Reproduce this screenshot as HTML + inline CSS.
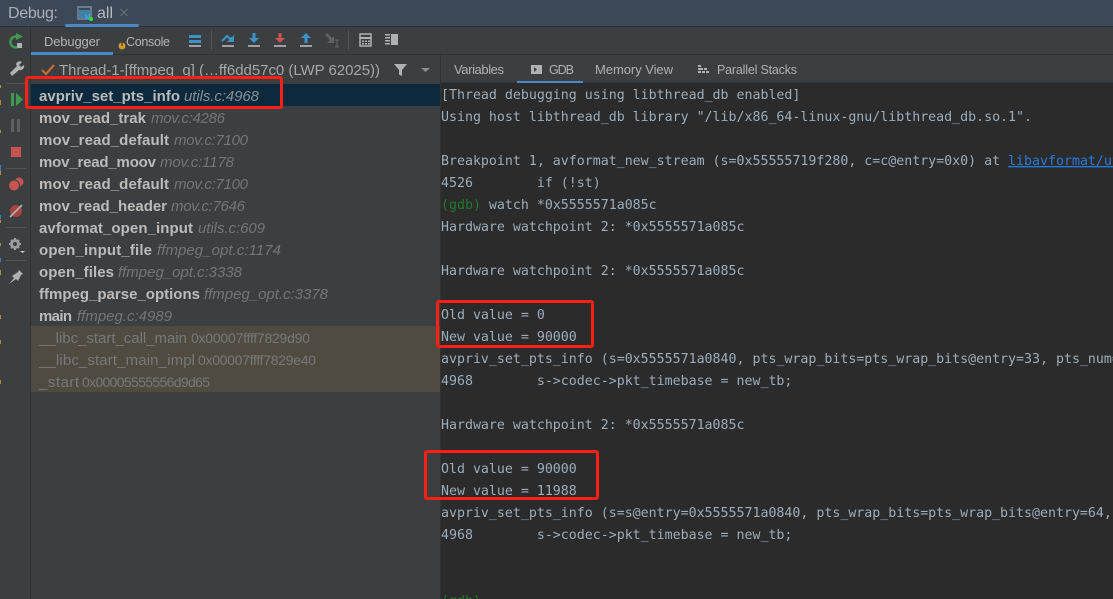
<!DOCTYPE html>
<html><head><meta charset="utf-8"><title>Debug</title>
<style>
html,body{margin:0;padding:0;background:#2b2b2b;overflow:hidden;width:1113px;height:599px}
svg{display:block}
text{white-space:pre}
.s{font-family:"Liberation Sans",sans-serif;font-size:13px;fill:#bbbbbb}
.f{font-family:"Liberation Sans",sans-serif;font-size:15px;font-weight:bold;fill:#bbbbbb}
.i{font-family:"Liberation Sans",sans-serif;font-size:15px;font-style:italic;fill:#757575}
.l{font-family:"Liberation Sans",sans-serif;font-size:15px;fill:#787878}
.h{font-family:"Liberation Sans",sans-serif;font-size:14px;fill:#787878}
.m{font-family:"DejaVu Sans Mono",monospace;font-size:13.28px;fill:#9dadbb}
</style></head><body>
<svg width="1113" height="599" viewBox="0 0 1113 599" xmlns="http://www.w3.org/2000/svg">
<rect width="1113" height="599" fill="#2b2b2b"/>
<rect width="1113" height="26" fill="#3d4856"/>
<rect y="26" width="1113" height="1" fill="#323232"/>
<rect y="27" width="441" height="572" fill="#3c3f41"/>
<rect x="441" y="27" width="672" height="55" fill="#3c3f41"/>
<rect x="31" y="54" width="1082" height="1" fill="#323232"/>
<rect x="30" y="27" width="1" height="572" fill="#323232"/>
<rect x="440" y="55" width="1" height="544" fill="#323232"/>
<rect x="441" y="82" width="672" height="1" fill="#323232"/>

<!-- Title bar -->
<text class="s" x="8" y="18" style="font-size:16px;fill:#aab0b8" textLength="50">Debug:</text>
<rect x="78" y="7" width="13" height="12" fill="none" stroke="#7a8a96" stroke-width="1.500"/>
<rect x="79" y="10" width="11" height="8" fill="#3d7fa5"/>
<path d="M85 19V13l2.500 3 2.500-3v6" fill="#3d9ad1"/>
<circle cx="91" cy="19" r="2" fill="#2ee02e"/>
<text class="s" x="97" y="18" style="font-size:16px;fill:#b4bac0" textLength="16">all</text>
<path d="M120.500 9l7 7m0-7l-7 7" stroke="#66707a" stroke-width="1.200"/>
<rect x="65" y="24" width="74" height="3" rx="1.500" fill="#4a88c7"/>

<!-- Toolbar tabs -->
<text class="s" x="44" y="46" textLength="56" style="fill:#b4b4b4">Debugger</text>
<rect x="31" y="52" width="82" height="3" fill="#4a88c7"/>
<circle cx="122" cy="46" r="3.500" fill="#d39a22"/>
<path d="M122 42v4" stroke="#3c3f41" stroke-width="1.200"/>
<text class="s" x="126" y="46" textLength="44" style="fill:#b4b4b4;font-size:12.500px">Console</text>

<!-- Toolbar icons -->
<rect x="189" y="35" width="12" height="3" fill="#3c93c9"/>
<rect x="189" y="40" width="12" height="3" fill="#3c93c9"/>
<rect x="189" y="45" width="12" height="2" fill="#a0a0a0"/>
<rect x="211" y="30" width="1" height="20" fill="#55585a"/>
<path d="M222 41l5-5 3 3 2-1.500" fill="none" stroke="#3c93c9" stroke-width="2"/>
<path d="M234 35v7h-7z" fill="#3c93c9"/>
<rect x="222" y="45" width="12" height="2" fill="#a0a0a0"/>
<path d="M254 33v7" stroke="#3c93c9" stroke-width="3"/><path d="M249 38h10l-5 5z" fill="#3c93c9"/>
<rect x="248" y="45" width="12" height="2" fill="#a0a0a0"/>
<path d="M280 33v7" stroke="#c75450" stroke-width="3"/><path d="M275 38h10l-5 5z" fill="#c75450"/>
<rect x="274" y="45" width="12" height="2" fill="#a0a0a0"/>
<path d="M306 43v-6" stroke="#3c93c9" stroke-width="3"/><path d="M301 38h10l-5-5z" fill="#3c93c9"/>
<rect x="300" y="45" width="12" height="2" fill="#a0a0a0"/>
<path d="M326 34l7 7" stroke="#5f6365" stroke-width="3"/><path d="M334 36v7h-7z" fill="#5f6365"/>
<path d="M335 40h4m-2 0v7m-2 0h4" stroke="#666a6c" stroke-width="1"/>
<rect x="348" y="30" width="1" height="20" fill="#55585a"/>
<rect x="360" y="34" width="11" height="12" fill="none" stroke="#afb1b3" stroke-width="1.500"/>
<path d="M360 37h11v2h-11zM362 40.500h2v1.500h-2zM365 40.500h2v1.500h-2zM368 40.500h2v1.500h-2zM362 43h2v1.500h-2zM365 43h2v1.500h-2zM368 43h2v1.500h-2z" fill="#afb1b3"/>
<path d="M385 34h5v1.500h-5zM385 37h5v1.500h-5zM385 40h5v1.500h-5zM385 43h5v1.500h-5z" fill="#afb1b3"/>
<rect x="391" y="34" width="7" height="11" fill="#afb1b3"/>

<!-- Thread row -->
<path d="M42 70l4 4 8-9" fill="none" stroke="#c76a34" stroke-width="2.200"/>
<text class="s" x="59" y="75" style="font-size:15px;fill:#a6a6a6" textLength="321">Thread-1-[ffmpeg_g] (…ff6dd57c0 (LWP 62025))</text>
<path d="M394 64h13l-5 6v6l-3-1.500V70z" fill="#afb1b3"/>
<path d="M421 68h9l-4.500 4z" fill="#8a8d8f"/>

<!-- Left sidebar -->
<path d="M20 46.500a5.500 5.500 0 1 1-0-9" fill="none" stroke="#3d9a50" stroke-width="2.400" transform="translate(-1,0)"/>
<path d="M16 33l7 3.500-7 3.500z" fill="#3d9a50"/>
<rect x="17" y="43" width="5" height="5" fill="#afb1b3"/>
<path d="M10 73l7-7-1-2a4 4 0 0 1 6-2l-3 3 2 2 3-2a4 4 0 0 1-5 5l-7 6z" fill="#afb1b3"/>
<rect x="6" y="83" width="20" height="1" fill="#505355"/>
<rect x="11" y="93" width="3" height="13" fill="#3d9a50"/>
<path d="M16 93l7 6.500-7 6.500z" fill="#3d9a50"/>
<rect x="11" y="119" width="3" height="13" fill="#5d6062"/><rect x="17" y="119" width="3" height="13" fill="#5d6062"/>
<rect x="11" y="147" width="10" height="10" fill="#c75450"/>
<rect x="6" y="168" width="20" height="1" fill="#505355"/>
<circle cx="19" cy="182" r="4.500" fill="#c75450"/><circle cx="14" cy="185.500" r="5.500" fill="#c75450" stroke="#3c3f41" stroke-width="1"/>
<circle cx="16" cy="211" r="6" fill="#a8433f"/>
<path d="M10 217l12-12" stroke="#afb1b3" stroke-width="1.800"/>
<rect x="6" y="227" width="20" height="1" fill="#505355"/>
<circle cx="15" cy="244" r="3.500" fill="none" stroke="#9a9c9e" stroke-width="3"/>
<path d="M15 238v2M15 248v2M9 244h2M19 244h2M11 240l1.500 1.500M17.500 246.500L19 248M19 240l-1.500 1.500M12.500 246.500L11 248" stroke="#9a9c9e" stroke-width="2"/>
<path d="M20 251h5l-2.500 2z" fill="#d0d0d0"/>
<rect x="6" y="260" width="20" height="1" fill="#505355"/>
<path d="M9 284l5-6-2-2 6-4 1-2 4 4-2 1-3 6-2-2z" fill="#afb1b3"/>
<!-- left strip marks -->
<path d="M0 85h1v3H0zM0 100h1v5H0zM0 130h1v3H0zM0 170h1v5H0zM0 220h1v3H0zM0 243h1v3H0zM0 270h1v5H0zM0 315h1v4H0zM0 340h1v4H0zM0 380h1v4H0z" fill="#b8902a"/>
<path d="M0 165h1v6H0zM0 215h1v4H0zM0 258h1v4H0z" fill="#3c7fc0"/>

<!-- Frames -->
<rect x="31" y="84" width="409" height="22" fill="#0d293e"/>
<rect x="31" y="326" width="409" height="66" fill="#4f4b41"/>
<text class="f" x="39" y="101" textLength="141">avpriv_set_pts_info</text><text class="i" x="184" y="101" textLength="75" style="fill:#8a8f93">utils.c:4968</text>
<text class="f" x="39" y="123" textLength="107">mov_read_trak</text><text class="i" x="151" y="123" textLength="74">mov.c:4286</text>
<text class="f" x="39" y="145" textLength="130">mov_read_default</text><text class="i" x="174" y="145" textLength="74">mov.c:7100</text>
<text class="f" x="39" y="167" textLength="117">mov_read_moov</text><text class="i" x="160" y="167" textLength="74">mov.c:1178</text>
<text class="f" x="39" y="189" textLength="130">mov_read_default</text><text class="i" x="174" y="189" textLength="74">mov.c:7100</text>
<text class="f" x="39" y="211" textLength="128">mov_read_header</text><text class="i" x="171" y="211" textLength="74">mov.c:7646</text>
<text class="f" x="39" y="233" textLength="154">avformat_open_input</text><text class="i" x="198" y="233" textLength="67">utils.c:609</text>
<text class="f" x="39" y="255" textLength="113">open_input_file</text><text class="i" x="157" y="255" textLength="124">ffmpeg_opt.c:1174</text>
<text class="f" x="39" y="277" textLength="75">open_files</text><text class="i" x="118" y="277" textLength="124">ffmpeg_opt.c:3338</text>
<text class="f" x="39" y="299" textLength="161">ffmpeg_parse_options</text><text class="i" x="204" y="299" textLength="124">ffmpeg_opt.c:3378</text>
<text class="f" x="39" y="321" textLength="33">main</text><text class="i" x="77" y="321" textLength="95">ffmpeg.c:4989</text>
<text class="l" x="39" y="343" textLength="148">__libc_start_call_main</text><text class="h" x="191" y="343" textLength="119">0x00007ffff7829d90</text>
<text class="l" x="39" y="365" textLength="156">__libc_start_main_impl</text><text class="h" x="198" y="365" textLength="118">0x00007ffff7829e40</text>
<text class="l" x="39" y="387" textLength="40">_start</text><text class="h" x="82" y="387" textLength="128">0x00005555556d9d65</text>

<!-- Right tabs -->
<text class="s" x="454" y="74" textLength="50" style="fill:#b0b0b0">Variables</text>
<rect x="531" y="65" width="11" height="9" fill="#afb1b3"/>
<path d="M534 67l3 2.500-3 2.500z" fill="#3c3f41"/>
<text class="s" x="549" y="74" textLength="25" style="fill:#b0b0b0;font-size:12.500px">GDB</text>
<rect x="517" y="81" width="66" height="2" fill="#4a88c7"/>
<text class="s" x="595" y="74" textLength="78" style="fill:#b0b0b0">Memory View</text>
<path d="M698 65h3v2h-3zM698 68h5v2h-5zM704 68h3v2h-3zM698 71h3v2h-3zM702 71h3v2h-3zM706 71h3v2h-3z" fill="#afb1b3"/>
<text class="s" x="717" y="74" textLength="80" style="fill:#b0b0b0;font-size:12.500px">Parallel Stacks</text>

<!-- Console -->
<g class="con">
<text class="m" x="441" y="99">[Thread debugging using libthread_db enabled]</text>
<text class="m" x="441" y="121">Using host libthread_db library "/lib/x86_64-linux-gnu/libthread_db.so.1".</text>
<text class="m" x="441" y="165">Breakpoint 1, avformat_new_stream (s=0x55555719f280, c=c@entry=0x0) at <tspan style="fill:#287bde;text-decoration:underline">libavformat/utils.c:4526</tspan></text>
<text class="m" x="441" y="187">4526        if (!st)</text>
<text class="m" x="441" y="209"><tspan style="fill:#1f7a2a">(gdb)</tspan> watch *0x5555571a085c</text>
<text class="m" x="441" y="231">Hardware watchpoint 2: *0x5555571a085c</text>
<text class="m" x="441" y="275">Hardware watchpoint 2: *0x5555571a085c</text>
<text class="m" x="441" y="319">Old value = 0</text>
<text class="m" x="441" y="341">New value = 90000</text>
<text class="m" x="441" y="363">avpriv_set_pts_info (s=0x5555571a0840, pts_wrap_bits=pts_wrap_bits@entry=33, pts_num=pts_num@entry=1</text>
<text class="m" x="441" y="385">4968        s-&gt;codec-&gt;pkt_timebase = new_tb;</text>
<text class="m" x="441" y="429">Hardware watchpoint 2: *0x5555571a085c</text>
<text class="m" x="441" y="473">Old value = 90000</text>
<text class="m" x="441" y="495">New value = 11988</text>
<text class="m" x="441" y="517">avpriv_set_pts_info (s=s@entry=0x5555571a0840, pts_wrap_bits=pts_wrap_bits@entry=64, pts_num=1</text>
<text class="m" x="441" y="539">4968        s-&gt;codec-&gt;pkt_timebase = new_tb;</text>
<text class="m" x="441" y="605" style="fill:#1f7a2a">(gdb)</text>
</g>

<!-- Red annotation rectangles -->
<g fill="none" stroke="#fb1f14" stroke-width="3">
<rect x="26.500" y="77.500" width="255" height="30" rx="1.500"/>
<rect x="437.500" y="301.500" width="155" height="45" rx="1.500"/>
<rect x="425.500" y="451.500" width="172" height="47" rx="1.500"/>
</g>
</svg>
</body></html>
